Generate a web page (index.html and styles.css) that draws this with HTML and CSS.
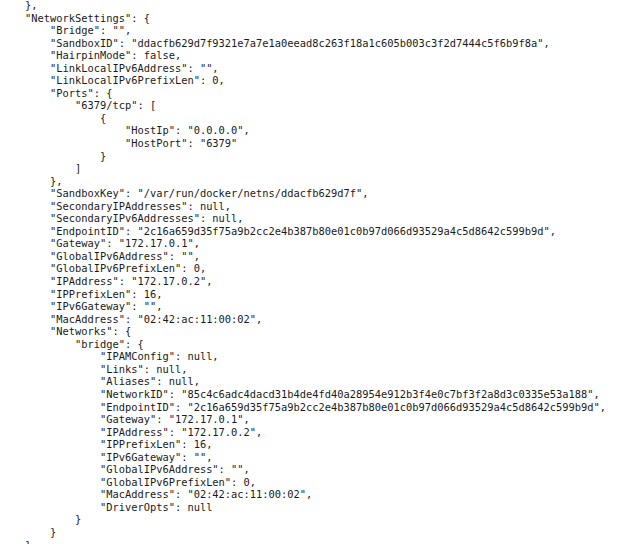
FILE: index.html
```html
<!DOCTYPE html>
<html lang="en">
<head>
<meta charset="utf-8">
<title>docker inspect</title>
<link rel="stylesheet" href="styles.css">
</head>
<body>
<pre class="json">    },
    "NetworkSettings": {
        "Bridge": "",
        "SandboxID": "ddacfb629d7f9321e7a7e1a0eead8c263f18a1c605b003c3f2d7444c5f6b9f8a",
        "HairpinMode": false,
        "LinkLocalIPv6Address": "",
        "LinkLocalIPv6PrefixLen": 0,
        "Ports": {
            "6379/tcp": [
                {
                    "HostIp": "0.0.0.0",
                    "HostPort": "6379"
                }
            ]
        },
        "SandboxKey": "/var/run/docker/netns/ddacfb629d7f",
        "SecondaryIPAddresses": null,
        "SecondaryIPv6Addresses": null,
        "EndpointID": "2c16a659d35f75a9b2cc2e4b387b80e01c0b97d066d93529a4c5d8642c599b9d",
        "Gateway": "172.17.0.1",
        "GlobalIPv6Address": "",
        "GlobalIPv6PrefixLen": 0,
        "IPAddress": "172.17.0.2",
        "IPPrefixLen": 16,
        "IPv6Gateway": "",
        "MacAddress": "02:42:ac:11:00:02",
        "Networks": {
            "bridge": {
                "IPAMConfig": null,
                "Links": null,
                "Aliases": null,
                "NetworkID": "85c4c6adc4dacd31b4de4fd40a28954e912b3f4e0c7bf3f2a8d3c0335e53a188",
                "EndpointID": "2c16a659d35f75a9b2cc2e4b387b80e01c0b97d066d93529a4c5d8642c599b9d",
                "Gateway": "172.17.0.1",
                "IPAddress": "172.17.0.2",
                "IPPrefixLen": 16,
                "IPv6Gateway": "",
                "GlobalIPv6Address": "",
                "GlobalIPv6PrefixLen": 0,
                "MacAddress": "02:42:ac:11:00:02",
                "DriverOpts": null
            }
        }
    },
}</pre>
</body>
</html>
```

FILE: styles.css
```css
html, body {
  margin: 0;
  padding: 0;
  background: #ffffff;
}

body {
  overflow: hidden;
  height: 544px;
}

.json {
  margin: -1px 0 0 0;
  padding: 0;
  font-family: "DejaVu Sans Mono", "Liberation Mono", monospace;
  font-size: 10.38px;
  line-height: 12.545px;
  color: #1a1a1a;
  white-space: pre;
}
```
